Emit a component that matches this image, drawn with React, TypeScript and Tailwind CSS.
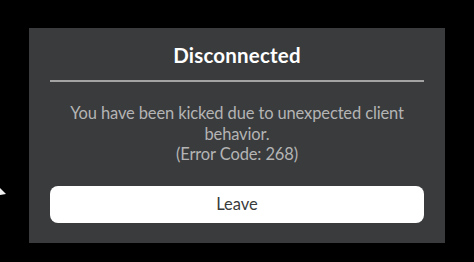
export default function App() {
  return (
    <div className="relative w-[474px] h-[262px] bg-black overflow-hidden" style={{ fontFamily: 'Lato, "Noto Sans", sans-serif' }}>
      <svg className="absolute left-0 top-[186px]" width="8" height="12" viewBox="0 0 8 12">
        <path d="M0 2 L6 8 L0 9 Z" fill="#f0f0f0" />
      </svg>
      <div className="absolute left-[29px] top-[28px] w-[416px] h-[215px] bg-[#393b3d] flex flex-col px-[21px]">
        <div className="h-[52px] flex items-center justify-center pt-[2px]">
          <span className="text-white font-bold text-[20.5px] tracking-[0.2px] leading-none">Disconnected</span>
        </div>
        <div className="h-[2px] bg-[#a3a3a3]" />
        <div className="mt-[21px] text-center text-[#b4b4b4] text-[16.5px] tracking-[-0.13px] leading-[20.5px]">
          You have been kicked due to unexpected client behavior.
          <br />
          (Error Code: 268)
        </div>
        <button className="mt-[21px] h-[37px] w-full rounded-[8px] bg-white text-[#393b3d] text-[16.5px] flex items-center justify-center">
          Leave
        </button>
      </div>
    </div>
  );
}
